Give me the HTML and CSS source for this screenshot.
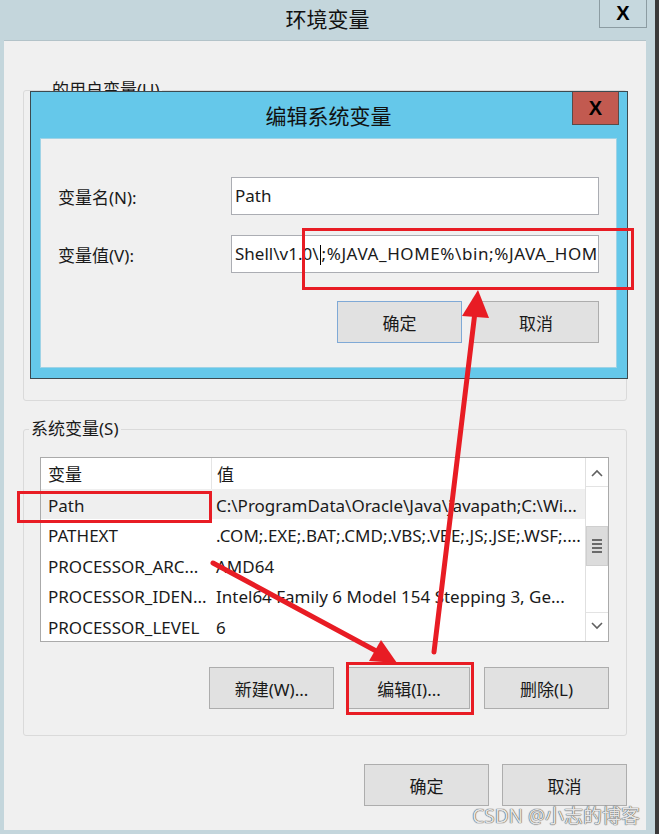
FILE: index.html
```html
<!DOCTYPE html>
<html lang="zh-CN">
<head>
<meta charset="utf-8">
<title>环境变量</title>
<link rel="stylesheet" href="styles.css">
</head>
<body>
<div class="window">
  <div class="titlebar">
    <span class="title">环境变量</span>
    <div class="close">X</div>
  </div>
  <div class="panel">
    <fieldset class="group user-group">
      <legend class="user-legend">的用户变量(U)</legend>
      <div class="user-body"></div>
    </fieldset>
    <fieldset class="group sys-group">
      <legend class="sys-legend">系统变量(S)</legend>
      <div class="sys-body">
        <div class="list">
          <div class="table">
            <div class="row head"><div class="c1">变量</div><div class="c2">值</div></div>
            <div class="row sel"><div class="c1">Path</div><div class="c2">C:\ProgramData\Oracle\Java\javapath;C:\Wi...</div></div>
            <div class="row"><div class="c1">PATHEXT</div><div class="c2">.COM;.EXE;.BAT;.CMD;.VBS;.VBE;.JS;.JSE;.WSF;....</div></div>
            <div class="row"><div class="c1">PROCESSOR_ARC...</div><div class="c2">AMD64</div></div>
            <div class="row"><div class="c1">PROCESSOR_IDEN...</div><div class="c2">Intel64 Family 6 Model 154 Stepping 3, Ge...</div></div>
            <div class="row"><div class="c1">PROCESSOR_LEVEL</div><div class="c2">6</div></div>
          </div>
          <div class="scrollbar">
            <div class="sb-btn"><svg width="14" height="10" viewBox="0 0 14 10"><path d="M2 8 L7 3 L12 8" fill="none" stroke="#606060" stroke-width="1.6"/></svg></div>
            <div class="sb-track">
              <div class="sb-thumb"><span></span><span></span><span></span><span></span></div>
            </div>
            <div class="sb-btn"><svg width="14" height="10" viewBox="0 0 14 10"><path d="M2 2 L7 7 L12 2" fill="none" stroke="#606060" stroke-width="1.6"/></svg></div>
          </div>
        </div>
        <div class="btn-row">
          <div class="btn w125">新建(W)...</div>
          <div class="btn w122">编辑(I)...</div>
          <div class="btn w125">删除(L)</div>
        </div>
      </div>
    </fieldset>
    <div class="footer">
      <div class="btn w125">确定</div>
      <div class="btn w125">取消</div>
    </div>
  </div>

  <div class="dialog">
    <div class="dialog-title">
      <span>编辑系统变量</span>
      <div class="dialog-close">X</div>
    </div>
    <div class="dialog-body">
      <div class="field">
        <label class="lbl">变量名(N):</label>
        <div class="input">Path</div>
      </div>
      <div class="field">
        <label class="lbl">变量值(V):</label>
        <div class="input">Shell\v1.0\<span class="caret"></span><span class="wide">;%JAVA_HOME%\bin;%JAVA_HOM</span></div>
      </div>
      <div class="dialog-btns">
        <div class="btn w125 default">确定</div>
        <div class="btn w126">取消</div>
      </div>
    </div>
  </div>

  <svg class="marks" width="659" height="834" viewBox="0 0 659 834">
    <g fill="none" stroke="#e81c24" stroke-width="3">
      <rect x="303.5" y="229.5" width="329" height="59"/>
      <rect x="18.5" y="492.5" width="192" height="29"/>
      <rect x="347.5" y="663.5" width="125" height="50"/>
    </g>
    <g stroke="#e81c24" stroke-width="5" stroke-linecap="round">
      <line x1="213" y1="563" x2="378" y2="652"/>
      <line x1="434" y1="652" x2="475" y2="312"/>
    </g>
    <g fill="#e81c24">
      <polygon points="397,663 369,661 381,640"/>
      <polygon points="478,290 462,316 489,318"/>
    </g>
  </svg>

  <div class="watermark">CSDN @小志的博客</div>
</div>
</body>
</html>
```
FILE: styles.css
```css
* { box-sizing: border-box; }
body {
  margin: 0;
  font-family: "Noto Sans", "Noto Sans CJK SC", sans-serif;
  font-size: 17px;
  color: #1a1a1a;
}
.window {
  position: relative;
  width: 659px;
  height: 834px;
  background: #c4d6dc;
  border-right: 4px solid #3a3a3a;
  overflow: hidden;
}
.titlebar {
  position: relative;
  height: 40px;
  text-align: center;
}
.title {
  font-family: "Noto Sans CJK SC", sans-serif;
  font-size: 21px;
  line-height: 37px;
  color: #111;
}
.close {
  position: absolute;
  right: 8px;
  top: 0;
  width: 48px;
  height: 28px;
  border: 1px solid #8c9ca2;
  border-top: none;
  background: #c6d8de;
  font: bold 20px/26px "Liberation Sans", sans-serif;
  text-align: center;
  color: #000;
}
.panel {
  margin-left: 4px;
  width: 642px;
  height: 790px;
  background: #f0f0f0;
  border-top: 1px solid #b3c3c9;
  padding-top: 38px;
  display: flex;
  flex-direction: column;
}
.group {
  margin: 0 19px;
  padding: 0;
  border: 1px solid #dadada;
  border-radius: 3px;
  min-width: 0;
}
.group legend {
  padding: 0 2px;
  font-size: 17px;
  line-height: 22px;
}
.user-legend { margin-left: 26px; }
.sys-legend { margin-left: 5px; }
.user-body { height: 299px; }
.sys-group { margin-top: 17px; }
.sys-body { padding: 17px 17px 26px 16px; }

.list {
  height: 185px;
  border: 1px solid #aaaaaa;
  background: #fff;
  display: flex;
}
.table { flex: 1; min-width: 0; }
.row {
  display: grid;
  grid-template-columns: 170px 1fr;
  height: 30.4px;
  line-height: 33px;
  white-space: nowrap;
  overflow: hidden;
}
.row.head { height: 31px; line-height: 32px; }
.row.sel { background: #efefef; }
.c1 { padding-left: 7px; overflow: hidden; }
.c2 { padding-left: 5px; overflow: hidden; }
.head .c2 { border-left: 1px solid #e5e5e5; }
.head .c1, .head .c2 { font-family: "Noto Sans CJK SC", sans-serif; }

.scrollbar {
  width: 23px;
  border-left: 1px solid #e0e0e0;
  display: flex;
  flex-direction: column;
  background: #fff;
}
.sb-btn {
  height: 27px;
  display: flex;
  align-items: center;
  justify-content: center;
  border-bottom: 1px solid #e3e3e3;
  margin-top: 2px;
}
.sb-btn:last-child { border-bottom: none; border-top: 1px solid #e3e3e3; margin-top: 0; margin-bottom: 2px; }
.sb-track { flex: 1; padding-top: 39px; }
.sb-thumb {
  height: 40px;
  background: #dcdcdc;
  border: 1px solid #cfcfcf;
  display: flex;
  flex-direction: column;
  align-items: center;
  justify-content: center;
  gap: 2px;
}
.sb-thumb span {
  width: 10px;
  height: 2px;
  background: #6a6a6a;
}

.btn {
  height: 42px;
  background: #e1e1e1;
  border: 1px solid #adadad;
  display: flex;
  align-items: center;
  justify-content: center;
  font-size: 17px;
  color: #1a1a1a;
}
.btn.default { border-color: #7fa9d6; }
.w125 { width: 125px; }
.w126 { width: 126px; }
.w122 { width: 122px; }
.btn-row {
  margin-top: 25px;
  display: flex;
  justify-content: flex-end;
  gap: 14px;
}
.footer {
  margin-top: 28px;
  padding-right: 19px;
  display: flex;
  justify-content: flex-end;
  gap: 13px;
}

.dialog {
  position: absolute;
  left: 30px;
  top: 91px;
  width: 598px;
  height: 288px;
  border: 1px solid #3c4a50;
  background: #65c8ea;
  padding: 0 10px 10px 9px;
  display: flex;
  flex-direction: column;
}
.dialog-title {
  position: relative;
  height: 46px;
  display: flex;
  align-items: center;
  justify-content: center;
  font-family: "Noto Sans CJK SC", sans-serif;
  font-size: 21px;
  color: #111;
}
.dialog-close {
  position: absolute;
  right: -2px;
  top: 0;
  width: 47px;
  height: 33px;
  background: #c25a50;
  border: 1px solid #5a4a48;
  border-top: none;
  font: bold 20px/32px "Liberation Sans", sans-serif;
  text-align: center;
  color: #000;
}
.dialog-body {
  flex: 1;
  background: #f0f0f0;
  border: 1px solid #9fd3e6;
  padding: 38px 17px 0 17px;
  display: flex;
  flex-direction: column;
  gap: 20px;
}
.field {
  display: flex;
  align-items: center;
}
.lbl { width: 173px; }
.input {
  width: 368px;
  height: 38px;
  border: 1px solid #abadb3;
  background: #fff;
  padding: 0 3px;
  line-height: 36px;
  white-space: nowrap;
  overflow: hidden;
}
.wide { letter-spacing: 0.6px; }
.caret {
  display: inline-block;
  width: 1px;
  height: 20px;
  background: #000;
  vertical-align: middle;
  margin: 0 1px;
}
.dialog-btns {
  margin-top: 8px;
  display: flex;
  justify-content: flex-end;
  gap: 11px;
}

.marks {
  position: absolute;
  left: 0;
  top: 0;
  pointer-events: none;
}
.watermark {
  position: absolute;
  right: 15px;
  bottom: 5px;
  font-size: 19px;
  color: #e4e4e4;
  text-shadow: 0 0 1px #444, 0 0 1px #444;
}
```
